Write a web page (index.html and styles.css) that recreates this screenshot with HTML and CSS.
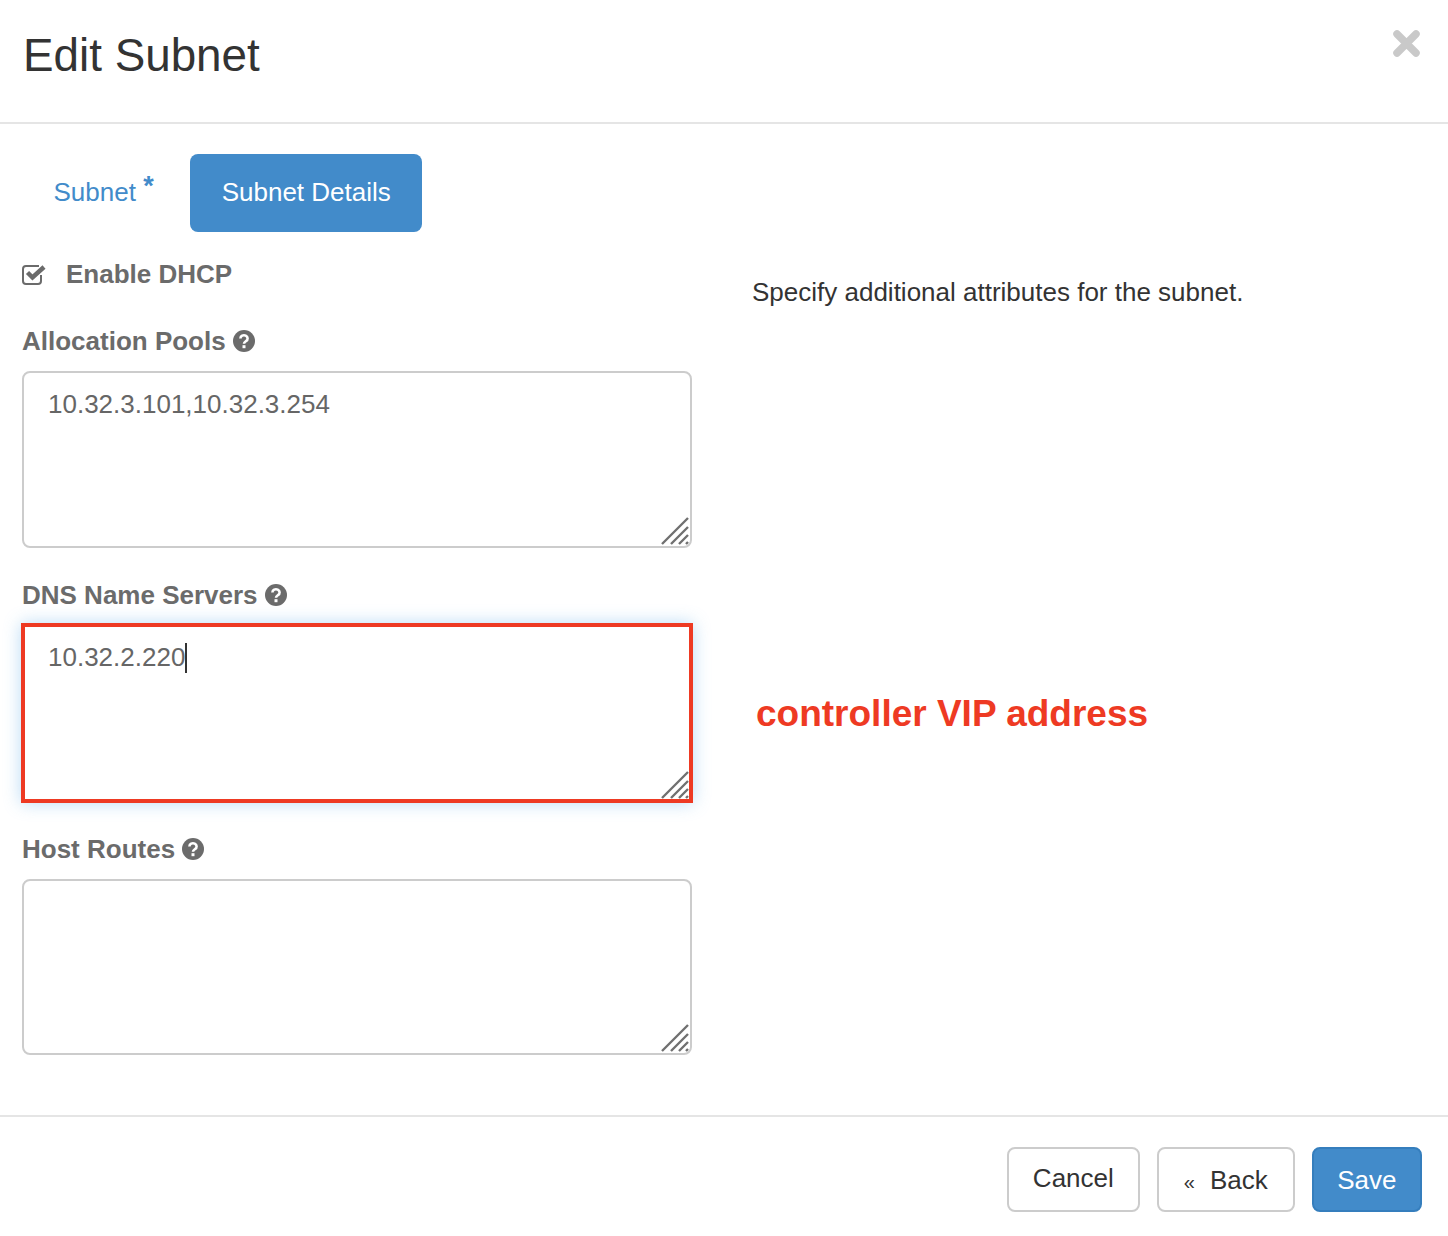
FILE: index.html
```html
<!DOCTYPE html>
<html lang="en">
<head>
  <meta charset="UTF-8">
  <title>Edit Subnet</title>
  <link rel="stylesheet" href="styles.css">
</head>
<body>
  <div class="modal-header">
    <h1>Edit Subnet</h1>
    <svg class="close-icon" width="28" height="28" viewBox="0 0 28 28"><path d="M4 4 L23 23 M23 4 L4 23" stroke="#c9c9c9" stroke-width="7.5" stroke-linecap="round"/></svg>
  </div>

  <div class="modal-body">
    <div class="tabs">
      <div class="tab">Subnet <span class="star">*</span></div>
      <div class="tab active">Subnet Details</div>
    </div>

    <div class="columns">
      <div class="form-col">
        <div class="checkbox-row">
          <svg class="check-icon" width="24" height="22" viewBox="0 0 24 22"><path d="M19 12V18a3 3 0 0 1-3 3H4a3 3 0 0 1-3-3V6a3 3 0 0 1 3-3h13" fill="none" stroke="#6b6b6b" stroke-width="2"/><path d="M5.5 9.5 L10.5 14.5 L22 4" fill="none" stroke="#6b6b6b" stroke-width="4.5"/></svg>
          <span>Enable DHCP</span>
        </div>

        <div class="field-label first">Allocation Pools
          <svg class="help-icon" width="22" height="22" viewBox="0 0 22 22"><circle cx="11" cy="11" r="11" fill="#6b6b6b"/><path d="M7.4 8.4a3.6 3.2 0 1 1 5.6 2.7c-1.3.9-2 1.3-2 2.7" fill="none" stroke="#fff" stroke-width="2.6"/><rect x="9.5" y="15.2" width="3" height="3" fill="#fff"/></svg>
        </div>
        <div class="text-box">10.32.3.101,10.32.3.254
          <svg class="resize-grip" width="28" height="28" viewBox="0 0 28 28"><path d="M1 27 L27 1 M10 27 L27 10 M18 27 L27 18 M25 27 L27 25" stroke="#707070" stroke-width="2.4"/></svg>
        </div>

        <div class="field-label">DNS Name Servers
          <svg class="help-icon" width="22" height="22" viewBox="0 0 22 22"><circle cx="11" cy="11" r="11" fill="#6b6b6b"/><path d="M7.4 8.4a3.6 3.2 0 1 1 5.6 2.7c-1.3.9-2 1.3-2 2.7" fill="none" stroke="#fff" stroke-width="2.6"/><rect x="9.5" y="15.2" width="3" height="3" fill="#fff"/></svg>
        </div>
        <div class="text-box focused">10.32.2.220<span class="caret"></span>
          <svg class="resize-grip" width="28" height="28" viewBox="0 0 28 28"><path d="M1 27 L27 1 M10 27 L27 10 M18 27 L27 18 M25 27 L27 25" stroke="#707070" stroke-width="2.4"/></svg>
        </div>

        <div class="field-label last">Host Routes
          <svg class="help-icon" width="22" height="22" viewBox="0 0 22 22"><circle cx="11" cy="11" r="11" fill="#6b6b6b"/><path d="M7.4 8.4a3.6 3.2 0 1 1 5.6 2.7c-1.3.9-2 1.3-2 2.7" fill="none" stroke="#fff" stroke-width="2.6"/><rect x="9.5" y="15.2" width="3" height="3" fill="#fff"/></svg>
        </div>
        <div class="text-box routes">
          <svg class="resize-grip" width="28" height="28" viewBox="0 0 28 28"><path d="M1 27 L27 1 M10 27 L27 10 M18 27 L27 18 M25 27 L27 25" stroke="#707070" stroke-width="2.4"/></svg>
        </div>
      </div>

      <div class="help-col">
        <p class="help-text">Specify additional attributes for the subnet.</p>
        <p class="note">controller VIP address</p>
      </div>
    </div>
  </div>

  <div class="modal-footer">
    <div class="btn cancel">Cancel</div>
    <div class="btn back"><span class="laquo">«</span>Back</div>
    <div class="btn primary">Save</div>
  </div>
</body>
</html>
```

FILE: styles.css
```css
* {
  box-sizing: border-box;
}
body {
  margin: 0;
  background: #fff;
  color: #333;
  font-family: "Liberation Sans", Arial, sans-serif;
  font-size: 26px;
}
/* Header */
.modal-header {
  height: 124px;
  border-bottom: 2px solid #e5e5e5;
  padding: 0 27px 0 23px;
  display: flex;
  justify-content: space-between;
}
.modal-header h1 {
  margin: 29px 0 0;
  font-size: 45.8px;
  font-weight: normal;
  line-height: 54px;
}
.close-icon {
  margin-top: 30px;
}
/* Body */
.modal-body {
  height: 991px;
  padding: 30px 22px 0;
}
.tabs {
  display: flex;
  gap: 5px;
}
.tab {
  height: 78px;
  line-height: 76px;
  padding: 0 31.5px;
  border-radius: 8px;
  color: #428bca;
}
.tab.active {
  background: #428bca;
  color: #fff;
}
.star {
  font-size: 27px;
  font-weight: bold;
  vertical-align: 6px;
  line-height: 1;
}
.columns {
  display: flex;
}
.form-col {
  width: 670px;
}
.checkbox-row {
  display: flex;
  align-items: center;
  height: 30px;
  margin-top: 27px;
  color: #6b6b6b;
  font-weight: bold;
}
.check-icon {
  margin-right: 20px;
}
.field-label {
  display: flex;
  align-items: center;
  gap: 7px;
  height: 30px;
  margin-top: 32px;
  margin-bottom: 14px;
  color: #6b6b6b;
  font-weight: bold;
}
.field-label.first {
  margin-top: 37px;
  margin-bottom: 15px;
}
.field-label.last {
  margin-top: 31px;
  margin-bottom: 15px;
}
.text-box {
  position: relative;
  height: 177px;
  padding: 15px 24px;
  border: 2px solid #ccc;
  border-radius: 8px;
  color: #666;
  line-height: 32px;
}
.text-box.focused {
  height: 180px;
  margin: -1px -1px 0;
  border: 4px solid #ee3a23;
  border-radius: 0;
  padding: 14px 23px;
  box-shadow: 0 0 16px rgba(102, 175, 233, 0.45);
}
.text-box.routes {
  height: 176px;
}
.caret {
  display: inline-block;
  width: 1.5px;
  height: 30px;
  background: #333;
  vertical-align: -7px;
}
.resize-grip {
  position: absolute;
  right: 1px;
  bottom: 1px;
}
.focused .resize-grip {
  right: 0;
  bottom: 0;
}
.help-col {
  padding-left: 60px;
}
.help-text {
  margin: 44px 0 0;
  line-height: 32px;
}
.note {
  margin: 384px 0 0 4px;
  color: #ee3a23;
  font-size: 37px;
  font-weight: bold;
  line-height: 44px;
}
/* Footer */
.modal-footer {
  height: 120px;
  border-top: 2px solid #e5e5e5;
  padding: 30px 26px 0 0;
  display: flex;
  justify-content: flex-end;
  gap: 17px;
}
.btn {
  height: 65px;
  line-height: 59px;
  padding: 0 24px;
  border: 2px solid #ccc;
  border-radius: 8px;
  background: #fff;
}
.back {
  line-height: 63px;
  padding: 0 25px;
}
.laquo {
  font-size: 20px;
  margin-right: 15px;
}
.btn.primary {
  line-height: 63px;
  padding: 0 23.5px;
  background: #428bca;
  border-color: #357ebd;
  color: #fff;
}
```
